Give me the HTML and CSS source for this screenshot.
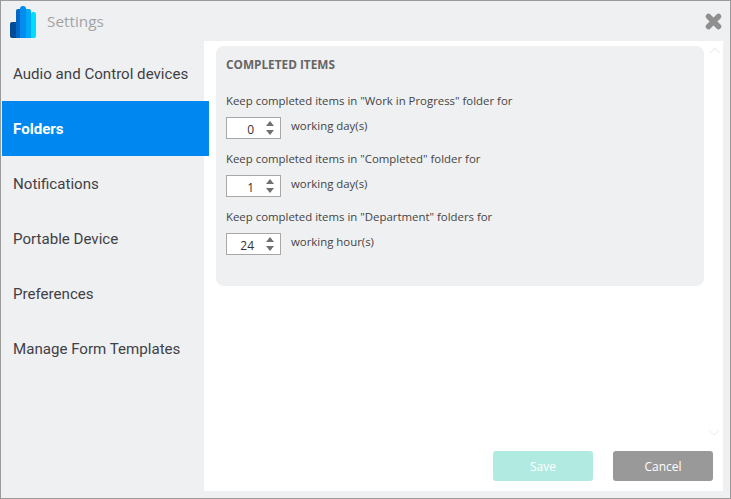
FILE: index.html
```html
<!DOCTYPE html>
<html lang="en">
<head>
<meta charset="utf-8">
<title>Settings</title>
<link rel="stylesheet" href="styles.css">
</head>
<body>
<div class="window">
  <header class="titlebar">
    <svg class="logo" width="26" height="32" viewBox="0 0 26 32">
      <path d="M0 18a2 2 0 0 1 2-2h4v16H2a2 2 0 0 1-2-2z" fill="#004a98"/>
      <path d="M6 5a2 2 0 0 1 2-2h2v29H6z" fill="#0067c4"/>
      <path d="M10 2a3 3 0 0 1 3-2 3 3 0 0 1 3 2v30h-6z" fill="#008cf0"/>
      <path d="M16 3h3a2 2 0 0 1 2 2v27h-5z" fill="#00aaf8"/>
      <path d="M21 8a2 2 0 0 1 2-2h1a2 2 0 0 1 2 2v22a2 2 0 0 1-2 2h-3z" fill="#00dcff"/>
    </svg>
    <span class="title">Settings</span>
    <svg class="close" width="17" height="17" viewBox="0 0 17 17">
      <path d="M3.5 3.5l10 10M13.5 3.5l-10 10" stroke="#8f8f8f" stroke-width="5.5" stroke-linecap="round" fill="none"/>
    </svg>
  </header>
  <div class="body">
    <nav class="sidebar">
      <a class="nav-item">Audio and Control devices</a>
      <a class="nav-item active">Folders</a>
      <a class="nav-item">Notifications</a>
      <a class="nav-item">Portable Device</a>
      <a class="nav-item">Preferences</a>
      <a class="nav-item">Manage Form Templates</a>
    </nav>
    <main class="content">
      <svg class="scroll-arrow top" width="12" height="7" viewBox="0 0 12 7"><path d="M1 6l5-5 5 5" fill="none" stroke="#f1f1f1" stroke-width="1.5"/></svg>
      <svg class="scroll-arrow bottom" width="12" height="7" viewBox="0 0 12 7"><path d="M1 1l5 5 5-5" fill="none" stroke="#f4f4f4" stroke-width="1.5"/></svg>
      <section class="panel">
        <h2 class="panel-title">COMPLETED ITEMS</h2>
        <div class="setting first">
          <p class="label">Keep completed items in "Work in Progress" folder for</p>
          <div class="row">
            <div class="spinner"><span class="value">0</span><span class="arrows"><i class="up"></i><i class="down"></i></span></div>
            <span class="unit">working day(s)</span>
          </div>
        </div>
        <div class="setting">
          <p class="label">Keep completed items in "Completed" folder for</p>
          <div class="row">
            <div class="spinner"><span class="value">1</span><span class="arrows"><i class="up"></i><i class="down"></i></span></div>
            <span class="unit">working day(s)</span>
          </div>
        </div>
        <div class="setting">
          <p class="label">Keep completed items in "Department" folders for</p>
          <div class="row">
            <div class="spinner"><span class="value">24</span><span class="arrows"><i class="up"></i><i class="down"></i></span></div>
            <span class="unit">working hour(s)</span>
          </div>
        </div>
      </section>
      <footer class="actions">
        <button class="btn save">Save</button>
        <button class="btn cancel">Cancel</button>
      </footer>
    </main>
  </div>
</div>
</body>
</html>
```
FILE: styles.css
```css
* { box-sizing: border-box; }
html, body { margin: 0; padding: 0; }
body { width: 731px; height: 499px; overflow: hidden; font-family: "Open Sans", sans-serif; }
.window {
  width: 731px; height: 499px;
  background: #eff0f2;
  border: 1px solid #9a9a9a;
  display: flex; flex-direction: column;
  padding: 0 7px 7px 1px;
}
.titlebar { height: 40px; display: flex; align-items: center; flex: none; position: relative; }
.logo { margin: 1px 0 0 8px; }
.title { margin-left: 11px; font-size: 15.3px; color: #a3a3a3; }
.close { margin-left: auto; margin-right: 1px; margin-top: 1px; }
.body { flex: 1; display: flex; min-height: 0; }
.sidebar { width: 202px; flex: none; padding-top: 5px; position: relative; z-index: 1; }
.nav-item {
  display: flex; align-items: center;
  height: 55px; width: 207px;
  padding: 0 0 0 11px;
  font: 400 15.1px/20px Roboto, sans-serif;
  color: #3f3f46;
}
.nav-item.active { background: #0088f0; color: #fff; font-weight: 700; }
.content { flex: 1; background: #fff; display: flex; flex-direction: column; padding: 5px 19px 10px 12px; position: relative; }
.scroll-arrow { position: absolute; right: 2px; }
.scroll-arrow.top { top: 6px; }
.scroll-arrow.bottom { top: 388px; right: 3px; }
.panel { height: 240px; background: #eff0f2; border-radius: 8px; padding: 11px 10px 0; }
.panel-title { margin: 0; font-size: 11.8px; line-height: 15px; font-weight: 700; color: #666; }
.setting { margin-top: 12px; }
.setting.first { margin-top: 21px; }
.label { margin: 0; font-size: 11.4px; line-height: 15px; color: #444; }
.row { display: flex; align-items: flex-start; margin-top: 9px; }
.spinner { width: 55px; height: 22px; background: #fff; border: 1px solid #a8a8a8; display: flex; align-items: center; }
.value { width: 27px; text-align: right; font-size: 12px; color: #333; margin-top: 2px; }
.arrows { margin-left: 12px; display: flex; flex-direction: column; gap: 4px; }
.arrows i { display: block; width: 0; height: 0; border-left: 4.5px solid transparent; border-right: 4.5px solid transparent; }
.arrows .up { border-bottom: 5px solid #707070; }
.arrows .down { border-top: 5px solid #707070; }
.unit { margin-left: 10px; font-size: 11.4px; line-height: 15px; color: #444; margin-top: 1px; }
.actions { margin-top: auto; display: flex; justify-content: flex-end; gap: 20px; margin-right: -9px; }
.btn { width: 100px; height: 30px; border: 0; border-radius: 3px; color: #fff; font: 400 12px "Open Sans", sans-serif; padding: 0; }
.save { background: #b0eae0; }
.cancel { background: #999; }
```
